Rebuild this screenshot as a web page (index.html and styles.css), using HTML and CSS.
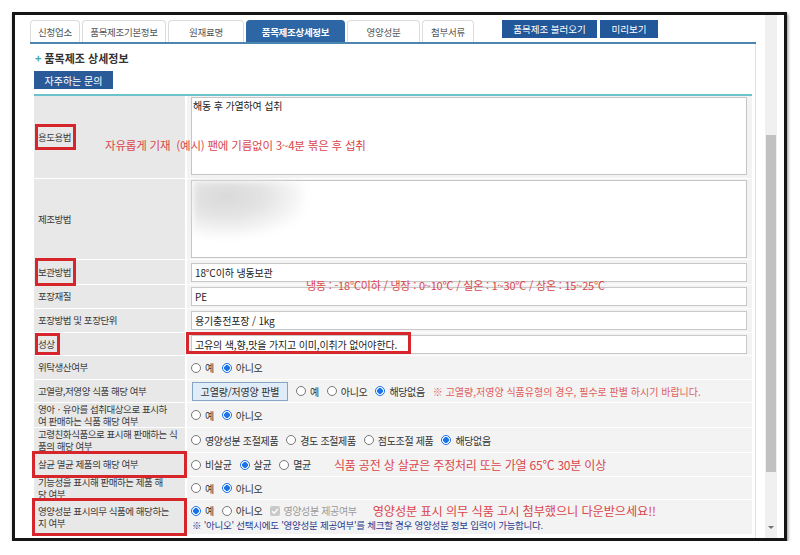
FILE: index.html
```html
<!DOCTYPE html>
<html lang="ko">
<head>
<meta charset="utf-8">
<title>품목제조 상세정보</title>
<link rel="stylesheet" href="styles.css">
</head>
<body>
<div class="frame">
  <div class="main">
    <div class="tabbar">
      <div class="tab t1">신청업소</div>
      <div class="tab t2">품목제조기본정보</div>
      <div class="tab t3">원재료명</div>
      <div class="tab t4 active">품목제조상세정보</div>
      <div class="tab t5">영양성분</div>
      <div class="tab t6">첨부서류</div>
      <div class="btn b1">품목제조 불러오기</div>
      <div class="btn b2">미리보기</div>
    </div>
    <div class="panel">
      <div class="title"><span class="plus">+</span>품목제조 상세정보</div>
      <div class="faq">자주하는 문의</div>
      <div class="table">
        <div class="lab"><span class="mk mk1">용도용법</span></div>
        <div class="val top"><div class="ta">해동 후 가열하여 섭취</div></div>

        <div class="lab">제조방법</div>
        <div class="val top"><div class="ta"><div class="blob"></div></div></div>

        <div class="lab"><span class="mk mk2">보관방법</span></div>
        <div class="val"><div class="inp">18℃이하 냉동보관</div></div>

        <div class="lab">포장재질</div>
        <div class="val"><div class="inp">PE</div></div>

        <div class="lab">포장방법 및 포장단위</div>
        <div class="val"><div class="inp">용기충전포장 / 1kg</div></div>

        <div class="lab"><span class="mk mk3">성상</span></div>
        <div class="val rel"><div class="inp">고유의 색,향,맛을 가지고 이미,이취가 없어야한다.</div><div class="vbox"></div></div>

        <div class="lab">위탁생산여부</div>
        <div class="val">
          <span class="opt"><span class="rd"></span>예</span>
          <span class="opt"><span class="rd on"></span>아니오</span>
        </div>

        <div class="lab">고열량,저영양 식품 해당 여부</div>
        <div class="val">
          <span class="pbtn">고열량/저영양 판별</span>
          <span class="opt"><span class="rd"></span>예</span>
          <span class="opt"><span class="rd"></span>아니오</span>
          <span class="opt"><span class="rd on"></span>해당없음</span>
          <span class="note-red">※ 고열량,저영양 식품유형의 경우, 필수로 판별 하시기 바랍니다.</span>
        </div>

        <div class="lab two">영아ㆍ유아를 섭취대상으로 표시하<br>여 판매하는 식품 해당 여부</div>
        <div class="val">
          <span class="opt"><span class="rd"></span>예</span>
          <span class="opt"><span class="rd on"></span>아니오</span>
        </div>

        <div class="lab two">고령친화식품으로 표시해 판매하는 식<br>품의 해당 여부</div>
        <div class="val">
          <span class="opt"><span class="rd"></span>영양성분 조절제품</span>
          <span class="opt"><span class="rd"></span>경도 조절제품</span>
          <span class="opt"><span class="rd"></span>점도조절 제품</span>
          <span class="opt"><span class="rd on"></span>해당없음</span>
        </div>

        <div class="lab boxed">살균 멸균 제품의 해당 여부</div>
        <div class="val">
          <span class="opt"><span class="rd"></span>비살균</span>
          <span class="opt"><span class="rd on"></span>살균</span>
          <span class="opt"><span class="rd"></span>멸균</span>
          <span class="ann ann3">식품 공전 상 살균은 주정처리 또는 가열 65℃ 30분 이상</span>
        </div>

        <div class="lab two">기능성을 표시해 판매하는 제품 해<br>당 여부</div>
        <div class="val">
          <span class="opt"><span class="rd"></span>예</span>
          <span class="opt"><span class="rd on"></span>아니오</span>
        </div>

        <div class="lab two boxed">영양성분 표시의무 식품에 해당하는<br>지 여부</div>
        <div class="val col">
          <div class="line">
            <span class="opt"><span class="rd on"></span>예</span>
            <span class="opt"><span class="rd"></span>아니오</span>
            <span class="opt dis"><svg class="cb" viewBox="0 0 10 10" width="10" height="10"><rect x="0" y="0" width="10" height="10" rx="2" fill="#c9c9c9"/><path d="M2.2 5.2 L4.2 7.2 L7.9 2.9" stroke="#fff" stroke-width="1.4" fill="none"/></svg>영양성분 제공여부</span>
            <span class="ann ann4">영양성분 표시 의무 식품 고시 첨부했으니 다운받으세요!!</span>
          </div>
          <div class="note-blue">※ '아니오' 선택시에도 '영양성분 제공여부'를 체크할 경우 영양성분 정보 입력이 가능합니다.</div>
        </div>

        <div class="ann ann1">자유롭게 기재&nbsp; (예시) 팬에 기름없이 3~4분 볶은 후 섭취</div>
        <div class="ann ann2">냉동 : -18℃이하 / 냉장 : 0~10℃ / 실온 : 1~30℃ / 상온 : 15~25℃</div>
      </div>
    </div>
  </div>
  <div class="scrollbar"><div class="thumb"></div><div class="arrow"></div></div>
</div>
</body>
</html>
```

FILE: styles.css
```css
* { box-sizing: border-box; }
body {
  margin: 0;
  background: #fff;
  font-family: "Noto Sans CJK KR", "Noto Sans", sans-serif;
  color: #333;
}
.frame {
  margin: 12px 0 0 12px;
  width: 775px;
  height: 529px;
  border: 3px solid #151515;
  display: flex;
  background: #fff;
  box-shadow: 1px 2px 3px rgba(0,0,0,0.45);
  overflow: hidden;
}
.main {
  width: 750px;
  padding: 5px 9px 0 15px;
  display: flex;
  flex-direction: column;
}
.scrollbar {
  width: 12px;
  background: #f0f0f0;
  display: flex;
  flex-direction: column;
  align-items: center;
  padding-top: 120px;
}
.thumb { width: 10px; height: 337px; background: #c1c1c1; }
.arrow {
  margin-top: auto;
  margin-bottom: 9px;
  width: 0; height: 0;
  border-left: 3px solid transparent;
  border-right: 3px solid transparent;
  border-top: 3px solid #707070;
}

/* tabs */
.tabbar {
  display: flex;
  align-items: flex-start;
  height: 24px;
  border-bottom: 2px solid #4d85b2;
}
.tab {
  height: 22px;
  border: 1px solid #dcdcdc;
  border-bottom: 0;
  border-radius: 4px 4px 0 0;
  margin-right: 2px;
  font-size: 9.5px;
  color: #555;
  letter-spacing: -0.3px;
  display: flex;
  align-items: center;
  justify-content: center;
  background: #fff;
}
.t1 { width: 50px; }
.t2 { width: 84px; }
.t3 { width: 76px; }
.t4 { width: 99px; }
.t5 { width: 73px; }
.t6 { width: 52px; }
.tab.active {
  background: #2d66a4;
  border-color: #2d66a4;
  color: #fff;
  font-weight: bold;
}
.btn {
  height: 18px;
  background: #22579a;
  color: #fff;
  font-size: 9.5px;
  display: flex;
  align-items: center;
  justify-content: center;
}
.b1 { width: 95px; margin-left: 26px; }
.b2 { width: 58px; margin-left: 3px; }

/* panel */
.panel {
  flex: 1;
  border-right: 1px solid #e2e2e2;
  padding: 0 3px 0 4px;
}
.title {
  margin-top: 7px;
  height: 14px;
  line-height: 14px;
  font-size: 11px;
  font-weight: bold;
  color: #333;
  padding-left: 1px;
}
.plus { color: #3ba6ae; margin-right: 3px; }
.faq {
  margin-top: 6px;
  width: 79px;
  height: 18px;
  background: #2b5a98;
  color: #fff;
  font-size: 10px;
  display: flex;
  align-items: center;
  justify-content: center;
}
.table {
  position: relative;
  margin-top: 5px;
  border-top: 2px solid #6cc3cb;
  display: grid;
  grid-template-columns: 151px 1fr;
  grid-template-rows: 82px 80px 24px 23px 23px 22px 23px 22px 24px 24px 23px 22px 34px;
  column-gap: 2px;
  row-gap: 1px;
  background: #fff;
}
.lab {
  background: #e8e8e8;
  display: flex;
  align-items: center;
  padding-left: 4px;
  font-size: 9.5px;
  line-height: 11px;
  letter-spacing: -0.45px;
  color: #3a3a3a;
  white-space: nowrap;
}
.lab.two { line-height: 12px; }
.val {
  background: #f3f3f3;
  display: flex;
  align-items: center;
  padding: 0 5px 0 4px;
  font-size: 10px;
  letter-spacing: -0.15px;
  color: #333;
  white-space: nowrap;
}
.val.top { align-items: flex-start; }
.val.rel { position: relative; }
.val.col {
  flex-direction: column;
  align-items: flex-start;
  justify-content: flex-start;
  padding-top: 4px;
}
.line { display: flex; align-items: center; height: 13px; }
.ta {
  width: 100%;
  height: 78px;
  margin-top: 1px;
  background: #fff;
  border: 1px solid #c5c5c5;
  padding: 2px 1px;
  line-height: 12px;
  color: #222;
}
.blob {
  width: 110px;
  height: 62px;
  margin: -2px 0 0 0;
  background: radial-gradient(ellipse 80% 70% at 30% 25%, #d9d9d9 0%, #e4e4e4 45%, rgba(255,255,255,0) 100%);
  filter: blur(3px);
}
.inp {
  width: 100%;
  height: 19px;
  background: #fff;
  border: 1px solid #c8c8c8;
  padding-left: 3px;
  display: flex;
  align-items: center;
  color: #222;
}
.vbox {
  position: absolute;
  left: -1px;
  top: -1px;
  width: 225px;
  height: 22px;
  border: 3px solid #d6262c;
  z-index: 2;
}

/* marks */
.mk {
  display: inline-block;
  position: relative;
  z-index: 2;
  outline: 3px solid #d6262c;
  padding: 4px 2px 4px 0;
  line-height: 12px;
}
.mk2 { padding: 5px 2px 5px 0; }
.mk3 { padding: 2px 2px 2px 0; }
.boxed {
  position: relative;
  z-index: 2;
  outline: 3px solid #d6262c;
  outline-offset: -1px;
}

/* radios */
.opt {
  display: inline-flex;
  align-items: center;
  margin-right: 8px;
  color: #333;
  letter-spacing: -0.35px;
}
.rd {
  width: 10px;
  height: 10px;
  border: 1px solid #777;
  border-radius: 50%;
  background: #fff;
  margin-right: 4px;
  flex: none;
}
.rd.on {
  border-color: #1a73e8;
  background: radial-gradient(circle, #1a73e8 0 2.6px, #fff 3.1px);
}
.cb { margin-right: 3px; flex: none; }
.opt.dis { color: #9a9a9a; }
.pbtn {
  height: 19px;
  width: 96px;
  margin-left: 1px;
  margin-right: 8px;
  background: #e0ecf8;
  border: 1px solid #86a4c3;
  display: inline-flex;
  align-items: center;
  justify-content: center;
  color: #333;
}
.note-red {
  margin-left: 0;
  color: #e0605e;
  font-size: 10px;
  letter-spacing: 0;
}
.note-blue {
  margin-top: 3px;
  margin-left: 1px;
  font-size: 9.5px;
  line-height: 11px;
  color: #2a3b8e;
  letter-spacing: -0.25px;
}

/* annotations */
.ann {
  color: #d9464b;
  white-space: nowrap;
  letter-spacing: -0.2px;
}
.ann1 {
  position: absolute;
  left: 71px;
  top: 42px;
  font-size: 11.5px;
  line-height: 14px;
}
.ann2 {
  position: absolute;
  left: 272px;
  top: 183px;
  font-size: 11px;
  line-height: 13px;
  letter-spacing: -0.2px;
}
.ann3 {
  margin-left: 15px;
  font-size: 12px;
  line-height: 14px;
}
.ann4 {
  margin-left: 8px;
  font-size: 12.2px;
  line-height: 14px;
  letter-spacing: -0.1px;
}
```
